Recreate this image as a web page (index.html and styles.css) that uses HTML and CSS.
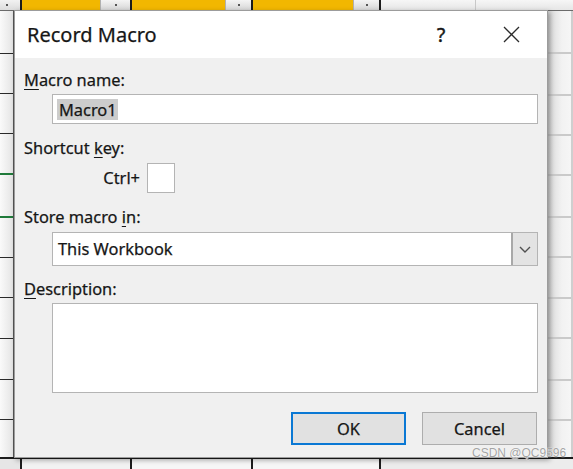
FILE: index.html
```html
<!DOCTYPE html>
<html>
<head>
<meta charset="utf-8">
<link rel="stylesheet" href="styles.css">
</head>
<body>
<div class="screen">
  <div class="header">
    <div class="hfirst"><span class="dot"></span></div>
    <div class="hcol c1"><div class="yellow"></div><div class="fbtn w29"><span class="dot"></span></div></div>
    <div class="hcol c2"><div class="yellow"></div><div class="fbtn"><span class="dot"></span></div></div>
    <div class="hcol c3"><div class="yellow"></div><div class="fbtn"><span class="dot"></span></div></div>
    <div class="hcol plain c4"></div>
    <div class="hcol plain c5"></div>
  </div>
  <div class="middle">
    <div class="leftcol">
      <div class="lrow h43"></div>
      <div class="lrow h40"></div>
      <div class="lrow h40"></div>
      <div class="lrow h41 green"></div>
      <div class="lrow h43 green"></div>
      <div class="lrow h40"></div>
      <div class="lrow h40"></div>
      <div class="lrow h41"></div>
      <div class="lrow h41"></div>
      <div class="lrow h40"></div>
      <div class="lrow rest"></div>
    </div>
    <div class="center"></div>
    <div class="rightcol">
      <div class="rrow h43"></div>
      <div class="rrow h42"></div>
      <div class="rrow h40"></div>
      <div class="rrow h40"></div>
      <div class="rrow h42"></div>
      <div class="rrow h40"></div>
      <div class="rrow h41"></div>
      <div class="rrow h40"></div>
      <div class="rrow h42"></div>
      <div class="rrow h40"></div>
      <div class="rrow rest"></div>
    </div>
  </div>
  <div class="footer">
    <div class="fcell f0"></div>
    <div class="fcell f1"></div>
    <div class="fcell f2"></div>
    <div class="fcell f3"></div>
    <div class="fcell f4"></div>
  </div>

  <div class="dialog">
    <div class="titlebar">
      <div class="title">Record Macro</div>
      <div class="capbtn help">?</div>
      <div class="capbtn close">
        <svg width="17" height="17" viewBox="0 0 17 17"><path d="M1 1 L16 16 M16 1 L1 16" stroke="#2b2b2b" stroke-width="1.3" fill="none"/></svg>
      </div>
    </div>
    <div class="body">
      <div class="label"><span class="ak">M</span>acro name:</div>
      <div class="field name"><span class="sel">Macro1</span></div>

      <div class="label gap14">Shortcut <span class="ak">k</span>ey:</div>
      <div class="ctrlrow">
        <div class="ctrltext">Ctrl+</div>
        <div class="keybox"></div>
      </div>

      <div class="label gap14">Store macro <span class="ak">i</span>n:</div>
      <div class="combo">
        <div class="combotext">This Workbook</div>
        <div class="combobtn">
          <svg width="12" height="7" viewBox="0 0 12 7"><path d="M1 1 L6 6 L11 1" stroke="#505050" stroke-width="1.4" fill="none"/></svg>
        </div>
      </div>

      <div class="label gap13"><span class="ak">D</span>escription:</div>
      <div class="field desc"></div>

      <div class="buttons">
        <div class="btn ok">OK</div>
        <div class="btn cancel">Cancel</div>
      </div>
    </div>
  </div>

  <div class="watermark">CSDN @QC9596</div>
</div>
</body>
</html>
```

FILE: styles.css
```css
html, body {
  margin: 0;
  padding: 0;
}
body {
  width: 573px;
  height: 469px;
  overflow: hidden;
  background: #ffffff;
}
.screen {
  position: relative;
  width: 573px;
  height: 469px;
  display: flex;
  flex-direction: column;
  overflow: hidden;
}

/* spreadsheet header strip */
.header {
  height: 10px;
  display: flex;
  border-bottom: 1px solid #6b6b6b;
  flex: none;
}
.hfirst {
  width: 20px;
  background: linear-gradient(#f2f2f2, #dcdcdc);
  display: flex;
  align-items: center;
  justify-content: center;
  padding-right: 6px;
  box-sizing: border-box;
}
.hcol {
  display: flex;
  border-left: 2px solid #1c1c1c;
}
.c1 { width: 108px; }
.c2 { width: 119px; }
.c3 { width: 126px; }
.c4 { width: 94px; background: linear-gradient(#f6f6f6, #e6e6e6); border-left: 2px solid #1c1c1c; }
.c5 { flex: 1; background: linear-gradient(#f6f6f6, #e6e6e6); border-left: 1px solid #c8c8c8; }
.yellow {
  flex: 1;
  background: #f2b700;
}
.fbtn {
  width: 25px;
  background: linear-gradient(#f4f4f4, #d6d6d6);
  border-left: 1px solid #b0b0b0;
  display: flex;
  align-items: center;
  justify-content: center;
}
.fbtn.w29 { width: 29px; }
.dot {
  width: 2px;
  height: 2px;
  background: #555;
}

/* middle rows */
.middle {
  flex: 1;
  display: flex;
  min-height: 0;
}
.leftcol {
  width: 13px;
  border-right: 1px solid #555;
  display: flex;
  flex-direction: column;
}
.lrow {
  box-sizing: border-box;
  border-bottom: 1px solid #2a2a2a;
  background: linear-gradient(90deg, #fafafa, #e4e4e4);
  flex: none;
}
.lrow.green { border-bottom: 2px solid #1f7a3a; }
.center { flex: 1; background: #fff; }
.rightcol {
  width: 25px;
  display: flex;
  flex-direction: column;
  border-right: 2px solid #cfcfcf;
  box-sizing: border-box;
}
.rrow {
  box-sizing: border-box;
  border-bottom: 2px solid #cacaca;
  background: linear-gradient(90deg, #d8d8d8, #f2f2f2 60%, #f6f6f6);
  flex: none;
}
.h40 { height: 40px; }
.h41 { height: 41px; }
.h42 { height: 42px; }
.h43 { height: 43px; }
.lrow.rest, .rrow.rest { flex: 1; border-bottom: none; }

/* footer */
.footer {
  height: 10px;
  display: flex;
  border-top: 2px solid #1c1c1c;
  flex: none;
}
.fcell { height: 100%; }
.f0 { width: 20px; background: #e6e6e6; }
.f1 { width: 108px; border-left: 2px solid #1c1c1c; background: #f2f2f2; }
.f2 { width: 119px; border-left: 2px solid #1c1c1c; background: #f6f6f6; }
.f3 { width: 126px; border-left: 2px solid #1c1c1c; background: #f6f6f6; }
.f4 { flex: 1; border-left: 2px solid #1c1c1c; background: #ececec; }

/* dialog window */
.dialog {
  position: absolute;
  left: 14px;
  top: 10px;
  width: 532px;
  height: 446px;
  border: 1px solid #9c9c9c;
  background: #f0f0f0;
  box-shadow: 2px 2px 5px rgba(0, 0, 0, 0.35);
  display: flex;
  flex-direction: column;
  font-family: "Noto Sans", "Open Sans", sans-serif;
  color: #161616;
  -webkit-text-stroke: 0.25px #161616;
}
.titlebar {
  height: 47px;
  background: #ffffff;
  display: flex;
  align-items: center;
  padding: 0 13px 0 12px;
  flex: none;
}
.title {
  flex: 1;
  font-size: 20px;
  line-height: 24px;
  padding-top: 1px;
}
.capbtn {
  width: 46px;
  display: flex;
  justify-content: center;
  align-items: center;
}
.help {
  font-size: 19px;
  line-height: 24px;
  margin-right: 24px;
  padding-top: 1px;
  -webkit-text-stroke: 0.5px #161616;
}
.close { padding-top: 0px; }

.body {
  flex: 1;
  padding: 12px 9px 0 9px;
  display: flex;
  flex-direction: column;
}
.label {
  font-size: 16.4px;
  line-height: 20px;
  height: 20px;
}
.ak {
  text-decoration: underline;
  text-underline-offset: 3px;
  text-decoration-thickness: 1px;
}
.gap14 { margin-top: 14px; }
.gap13 { margin-top: 13px; }

.field {
  margin-left: 28px;
  background: #ffffff;
  border: 1px solid #b4b4b4;
  box-sizing: border-box;
}
.field.name {
  margin-top: 4px;
  height: 30px;
  display: flex;
  align-items: center;
  padding-left: 4px;
}
.sel {
  background: #cccccc;
  font-size: 16.4px;
  line-height: 21px;
  padding: 0 1px 0 2px;
}
.ctrlrow {
  margin-top: 5px;
  display: flex;
  align-items: center;
  height: 30px;
}
.ctrltext {
  width: 116px;
  text-align: right;
  font-size: 16.4px;
  line-height: 20px;
}
.keybox {
  margin-left: 7px;
  width: 28px;
  height: 30px;
  background: #fff;
  border: 1px solid #b4b4b4;
  box-sizing: border-box;
}
.combo {
  margin-top: 5px;
  margin-left: 28px;
  height: 34px;
  box-sizing: border-box;
  border: 1px solid #b4b4b4;
  background: #fff;
  display: flex;
}
.combotext {
  flex: 1;
  font-size: 16.4px;
  line-height: 32px;
  padding-left: 5px;
}
.combobtn {
  width: 26px;
  box-sizing: border-box;
  background: #e3e3e3;
  border-left: 2px solid #a8a8a8;
  display: flex;
  align-items: center;
  justify-content: center;
}
.field.desc {
  margin-top: 4px;
  height: 90px;
}
.buttons {
  margin-top: 19px;
  display: flex;
  justify-content: flex-end;
  gap: 16px;
  margin-right: 1px;
}
.btn {
  width: 115px;
  height: 33px;
  box-sizing: border-box;
  background: #e1e1e1;
  font-size: 16.4px;
  display: flex;
  align-items: center;
  justify-content: center;
}
.btn.ok { border: 2px solid #0a78d4; }
.btn.cancel { border: 1px solid #adadad; }

.watermark {
  position: absolute;
  left: 472px;
  top: 447px;
  font-family: "Liberation Sans", Arial, sans-serif;
  font-size: 12px;
  line-height: 12px;
  color: #a4a4a4;
  text-shadow: 0 0 1px #fff, 0 0 1px #fff;
}
```
